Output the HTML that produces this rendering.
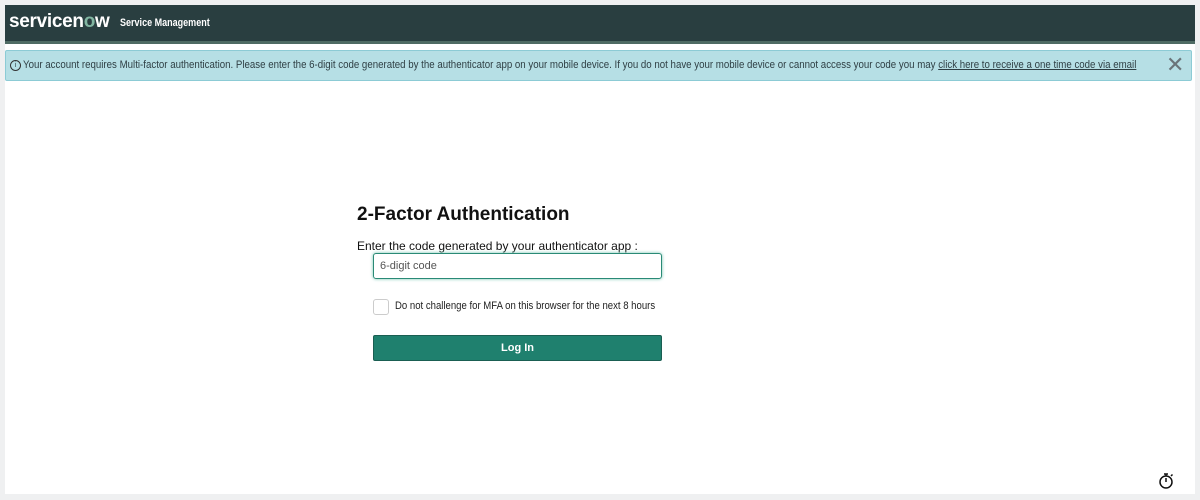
<!DOCTYPE html>
<html><head><style>
html,body{margin:0;padding:0;}
body{width:1200px;height:500px;background:#eff0f1;position:relative;overflow:hidden;font-family:"Liberation Sans",sans-serif;}
.page{position:absolute;left:5px;top:5px;width:1190px;height:489px;background:#fff;overflow:hidden;}
.hdr{position:absolute;left:0;top:0;width:1190px;height:36px;background:#293e40;}
.hdr .line{position:absolute;left:0;top:36px;width:1190px;height:3px;background:#4f6b64;}
.logo{position:absolute;left:4px;top:6px;color:#fff;font-size:19px;font-weight:bold;letter-spacing:-0.3px;}
.logo span{color:#81b5a1;}
.sm{position:absolute;left:115px;top:12px;color:#fff;font-size:11px;font-weight:bold;transform:scaleX(0.82);transform-origin:0 0;white-space:nowrap;}
.banner{position:absolute;left:0;top:45px;width:1185px;height:29px;background:#b6dfe5;border:1px solid #8ccbd5;border-radius:2px;font-size:11.2px;color:#2f3f44;line-height:29px;white-space:nowrap;}
.bt{position:absolute;left:17px;top:0;transform:scaleX(0.866);transform-origin:0 0;}
.banner .i{position:absolute;left:4px;top:9px;width:9px;height:9px;border:1px solid #333;border-radius:50%;font-size:7px;line-height:9px;text-align:center;}
.banner a{color:#2f3f44;text-decoration:underline;}
.x{position:absolute;left:1160px;top:5px;font-size:22px;color:#6a7479;line-height:18px;}
h1{position:absolute;left:352px;top:199px;margin:0;font-size:19px;font-weight:bold;color:#111;}
.lbl{position:absolute;left:352px;top:234px;font-size:12px;color:#111;}
.inp{position:absolute;left:368px;top:248px;width:281px;height:24px;border:1px solid #2a8a76;border-radius:3px;box-shadow:0 0 3px #6fc2ae;font-size:11px;color:#555;line-height:24px;padding-left:6px;}
.cb{position:absolute;left:368px;top:294px;width:14px;height:14px;border:1px solid #ccc;border-radius:3px;}
.cbl{position:absolute;left:390px;top:295px;font-size:11px;color:#222;transform:scaleX(0.87);transform-origin:0 0;white-space:nowrap;}
.btn{position:absolute;left:368px;top:330px;width:287px;height:24px;background:#1f806e;border:1px solid #1a5e52;border-radius:2px;color:#fff;font-size:11px;font-weight:bold;text-align:center;line-height:24px;}
.tm{position:absolute;left:1154px;top:467px;}
</style></head><body>
<div class="page">
<div class="hdr"><div class="logo">servicen<span>o</span>w</div><div class="sm">Service Management</div><div class="line"></div></div>
<div class="banner"><span class="i">i</span><span class="bt">Your account requires Multi-factor authentication. Please enter the 6-digit code generated by the authenticator app on your mobile device. If you do not have your mobile device or cannot access your code you may <a>click here to receive a one time code via email</a></span><span class="x">✕</span></div>
<h1>2-Factor Authentication</h1>
<div class="lbl">Enter the code generated by your authenticator app :</div>
<div class="inp">6-digit code</div>
<div class="cb"></div>
<div class="cbl">Do not challenge for MFA on this browser for the next 8 hours</div>
<div class="btn">Log In</div>
<svg class="tm" width="16" height="18" viewBox="0 0 16 18"><circle cx="7" cy="10" r="6" fill="none" stroke="#111" stroke-width="1.5"/><line x1="5" y1="2" x2="9" y2="2" stroke="#111" stroke-width="1.5"/><line x1="7" y1="2" x2="7" y2="4" stroke="#111" stroke-width="1.5"/><line x1="7" y1="6" x2="7" y2="10" stroke="#111" stroke-width="1.5"/><line x1="12" y1="4" x2="13.5" y2="2.5" stroke="#111" stroke-width="1.5"/></svg>
</div>
</body></html>
